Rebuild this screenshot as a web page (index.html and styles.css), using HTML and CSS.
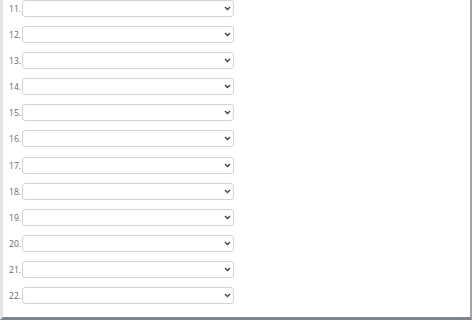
FILE: index.html
```html
<!DOCTYPE html>
<html>
<head>
<meta charset="utf-8">
<link rel="stylesheet" href="styles.css">
</head>
<body>
<div class="frame">
  <ol class="list">
    <li class="row"><span class="num">11.</span><div class="select"><span class="chev"><svg width="7" height="5" viewBox="0 0 7 5"><path d="M1 1 L3.5 3.5 L6 1" fill="none" stroke="#444" stroke-width="1.4"/></svg></span></div></li>
    <li class="row"><span class="num">12.</span><div class="select"><span class="chev"><svg width="7" height="5" viewBox="0 0 7 5"><path d="M1 1 L3.5 3.5 L6 1" fill="none" stroke="#444" stroke-width="1.4"/></svg></span></div></li>
    <li class="row"><span class="num">13.</span><div class="select"><span class="chev"><svg width="7" height="5" viewBox="0 0 7 5"><path d="M1 1 L3.5 3.5 L6 1" fill="none" stroke="#444" stroke-width="1.4"/></svg></span></div></li>
    <li class="row"><span class="num">14.</span><div class="select"><span class="chev"><svg width="7" height="5" viewBox="0 0 7 5"><path d="M1 1 L3.5 3.5 L6 1" fill="none" stroke="#444" stroke-width="1.4"/></svg></span></div></li>
    <li class="row"><span class="num">15.</span><div class="select"><span class="chev"><svg width="7" height="5" viewBox="0 0 7 5"><path d="M1 1 L3.5 3.5 L6 1" fill="none" stroke="#444" stroke-width="1.4"/></svg></span></div></li>
    <li class="row"><span class="num">16.</span><div class="select"><span class="chev"><svg width="7" height="5" viewBox="0 0 7 5"><path d="M1 1 L3.5 3.5 L6 1" fill="none" stroke="#444" stroke-width="1.4"/></svg></span></div></li>
    <li class="row"><span class="num">17.</span><div class="select"><span class="chev"><svg width="7" height="5" viewBox="0 0 7 5"><path d="M1 1 L3.5 3.5 L6 1" fill="none" stroke="#444" stroke-width="1.4"/></svg></span></div></li>
    <li class="row"><span class="num">18.</span><div class="select"><span class="chev"><svg width="7" height="5" viewBox="0 0 7 5"><path d="M1 1 L3.5 3.5 L6 1" fill="none" stroke="#444" stroke-width="1.4"/></svg></span></div></li>
    <li class="row"><span class="num">19.</span><div class="select"><span class="chev"><svg width="7" height="5" viewBox="0 0 7 5"><path d="M1 1 L3.5 3.5 L6 1" fill="none" stroke="#444" stroke-width="1.4"/></svg></span></div></li>
    <li class="row"><span class="num">20.</span><div class="select"><span class="chev"><svg width="7" height="5" viewBox="0 0 7 5"><path d="M1 1 L3.5 3.5 L6 1" fill="none" stroke="#444" stroke-width="1.4"/></svg></span></div></li>
    <li class="row"><span class="num">21.</span><div class="select"><span class="chev"><svg width="7" height="5" viewBox="0 0 7 5"><path d="M1 1 L3.5 3.5 L6 1" fill="none" stroke="#444" stroke-width="1.4"/></svg></span></div></li>
    <li class="row"><span class="num">22.</span><div class="select"><span class="chev"><svg width="7" height="5" viewBox="0 0 7 5"><path d="M1 1 L3.5 3.5 L6 1" fill="none" stroke="#444" stroke-width="1.4"/></svg></span></div></li>
  </ol>
</div>
</body>
</html>
```
FILE: styles.css
```css
html, body {
  margin: 0;
  padding: 0;
  background: #ffffff;
}
body {
  width: 474px;
  height: 320px;
  overflow: hidden;
  font-family: "Open Sans", "Liberation Sans", sans-serif;
}
.frame {
  width: 467px;
  height: 317px;
  border-left: 3px solid #e4e4e4;
  border-right: 2px solid #a3a3a3;
  border-bottom: 3px solid #7d8791;
  background: #fff;
  overflow: hidden;
}
.list {
  list-style: none;
  margin: 0;
  padding: 0 0 0 5px;
  display: flex;
  flex-direction: column;
  gap: 9.1px;
}
.row {
  display: flex;
  align-items: center;
  gap: 1px;
  height: 17px;
}
.num {
  width: 13px;
  font-size: 8.5px;
  color: #666;
  text-align: right;
}
.select {
  box-sizing: border-box;
  width: 212px;
  height: 17px;
  border: 1px solid #d2d2d2;
  border-radius: 3px;
  background: #fff;
  display: flex;
  align-items: center;
  justify-content: flex-end;
  padding-right: 2px;
}
.chev {
  display: flex;
  width: 7px;
  height: 5px;
}
.chev svg { display: block; }
```
